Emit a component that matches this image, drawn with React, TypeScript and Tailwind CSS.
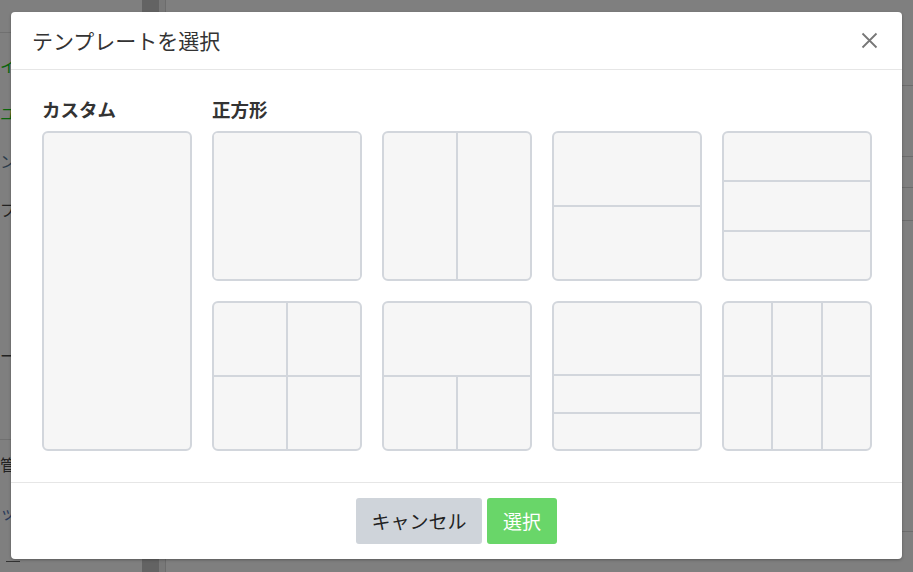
import React from "react";

const font = { fontFamily: '"Noto Sans CJK JP", "Noto Sans", sans-serif' };

function Cell({ className = "" }: { className?: string }) {
  return <div className={"bg-[#f6f6f6] " + className} />;
}

function Card({ grid, children }: { grid: string; children: React.ReactNode }) {
  return (
    <div
      className={
        "w-[150px] h-[150px] rounded-[6px] border-2 border-[#d2d6dc] bg-[#d2d6dc] overflow-hidden grid gap-[2px] cursor-pointer " +
        grid
      }
    >
      {children}
    </div>
  );
}

function Side({ children, className = "" }: { children: React.ReactNode; className?: string }) {
  return (
    <div className={"h-[48px] flex items-center " + className}>
      <div className="w-[11px] overflow-hidden whitespace-nowrap">{children}</div>
    </div>
  );
}

export default function App() {
  return (
    <div className="relative w-full h-[572px] overflow-hidden bg-[#7f7f7f]" style={font}>
      {/* background page (dimmed) */}
      <div className="flex h-full">
        <div className="w-[142px] flex flex-col text-[16px] text-[#222]">
          <div className="h-[33px] border-b border-[#707070]" />
          <div className="h-[8px]" />
          <Side className="text-[#0b660b]">イ</Side>
          <Side className="text-[#0b660b]">ユ</Side>
          <Side className="text-[#2a3a4a]">ン</Side>
          <Side>プ</Side>
          <div className="h-[98px]" />
          <Side>ー</Side>
          <div className="h-[61px] border-b border-[#707070]" />
          <Side>管</Side>
          <Side className="text-[#2a3a5a]">ッ</Side>
          <div className="h-[30px] flex items-end pl-[6px]">
            <div className="w-[14px] h-[1px] bg-[#333] mb-[4px]" />
          </div>
        </div>
        <div className="w-[17px] bg-[#636363]" />
        <div className="w-[7px] bg-[#787878] border-r border-[#6c6c6c]" />
        <div className="flex-1 flex flex-col">
          <div className="h-[86px] border-b border-[#6c6c6c]" />
          <div className="h-[71px] border-b border-[#6c6c6c]" />
          <div className="h-[31px] border-b border-[#6c6c6c]" />
          <div className="h-[33px] border-b border-[#6c6c6c]" />
          <div className="h-[311px] border-b border-[#6c6c6c]" />
        </div>
      </div>

      {/* modal */}
      <div className="absolute inset-0 flex items-start justify-center pt-[12px]">
        <div className="w-[891px] h-[547px] bg-white rounded-[4px] flex flex-col shadow-[0_1px_3px_rgba(0,0,0,0.3)]">
          <div className="h-[58px] shrink-0 flex items-center justify-between pl-[21px] pr-[24px] border-b border-[#e6e6e6]">
            <div className="text-[21px] text-[#333] leading-none">テンプレートを選択</div>
            <svg width="17" height="17" viewBox="0 0 17 17" className="text-[#777]">
              <path d="M1.5 1.5 L15.5 15.5 M15.5 1.5 L1.5 15.5" stroke="currentColor" strokeWidth="1.8" fill="none" />
            </svg>
          </div>
          <div className="flex-1 flex gap-[20px] px-[31px] pt-[27px]">
            <div className="flex flex-col">
              <div className="text-[18.5px] font-bold text-[#333] leading-[24px] mb-[10px]">カスタム</div>
              <div className="w-[150px] h-[320px] rounded-[6px] border-2 border-[#d2d6dc] bg-[#f6f6f6]" />
            </div>
            <div className="flex flex-col">
              <div className="text-[18.5px] font-bold text-[#333] leading-[24px] mb-[10px]">正方形</div>
              <div className="grid grid-cols-[150px_150px_150px_150px] gap-[20px]">
                <Card grid="grid-cols-1">
                  <Cell />
                </Card>
                <Card grid="grid-cols-2">
                  <Cell />
                  <Cell />
                </Card>
                <Card grid="grid-rows-2">
                  <Cell />
                  <Cell />
                </Card>
                <Card grid="grid-rows-3">
                  <Cell />
                  <Cell />
                  <Cell />
                </Card>
                <Card grid="grid-cols-2 grid-rows-2">
                  <Cell />
                  <Cell />
                  <Cell />
                  <Cell />
                </Card>
                <Card grid="grid-cols-2 grid-rows-2">
                  <Cell className="col-span-2" />
                  <Cell />
                  <Cell />
                </Card>
                <Card grid="grid-rows-[2fr_1fr_1fr]">
                  <Cell />
                  <Cell />
                  <Cell />
                </Card>
                <Card grid="grid-cols-3 grid-rows-2">
                  <Cell />
                  <Cell />
                  <Cell />
                  <Cell />
                  <Cell />
                  <Cell />
                </Card>
              </div>
            </div>
          </div>
          <div className="h-[77px] shrink-0 border-t border-[#e6e6e6] flex items-start justify-center gap-[5px] pt-[15px]">
            <button className="h-[46px] w-[126px] rounded-[3px] bg-[#cfd4da] text-[19px] text-[#222] whitespace-nowrap">
              キャンセル
            </button>
            <button className="h-[46px] w-[70px] rounded-[3px] bg-[#69d669] text-[19px] text-white">
              選択
            </button>
          </div>
        </div>
      </div>
    </div>
  );
}
